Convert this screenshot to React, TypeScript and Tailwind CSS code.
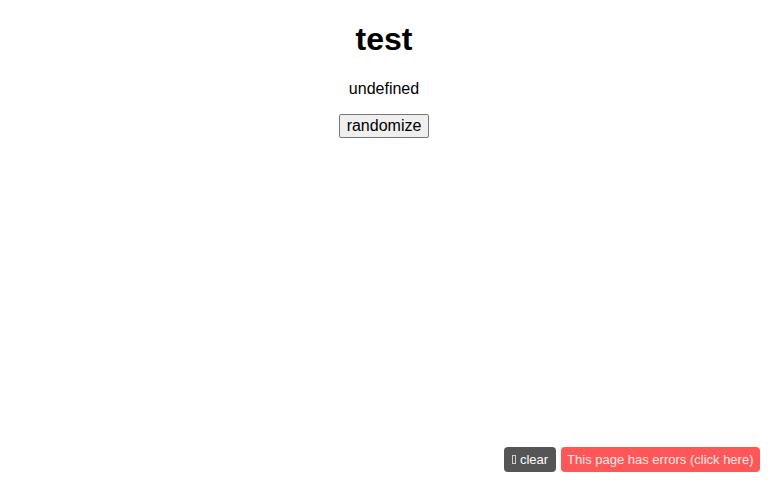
export default function App() {
  return (
    <div className="min-h-screen bg-white text-black font-['Liberation_Sans',Arial,sans-serif]">
      <div className="flex flex-col items-center pt-[21px] text-center">
        <h1 className="text-[32px] font-bold leading-[37px]">test</h1>
        <p className="mt-[22px] text-[16px] leading-[18px]">undefined</p>
        <div className="mt-[16px]">
          <button className="h-[24px] rounded-[2px] border border-[#767676] bg-[#efefef] px-[7px] text-[16px] leading-[18px]">
            randomize
          </button>
        </div>
      </div>

      <div className="fixed bottom-[8px] right-[8px] flex gap-[5px] text-[13px] leading-[15px]">
        <button className="flex h-[25px] items-center gap-[4px] rounded-[4px] bg-[#555555] px-[7.5px] text-white">
          <span className="inline-block h-[9px] w-[4px] border border-[#cfcfcf]" />
          clear
        </button>
        <button className="h-[25px] rounded-[4px] bg-[#fd5757] px-[6.5px] text-[#fbeaea]">
          This page has errors (click here)
        </button>
      </div>
    </div>
  );
}
